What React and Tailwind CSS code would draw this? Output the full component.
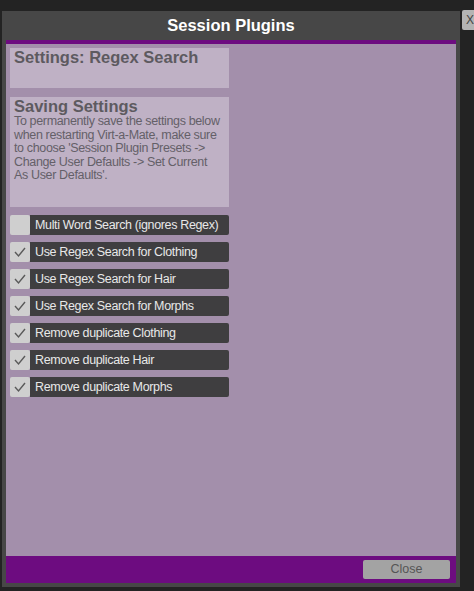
import React from "react";

const items = [
  { label: "Multi Word Search (ignores Regex)", checked: false },
  { label: "Use Regex Search for Clothing", checked: true },
  { label: "Use Regex Search for Hair", checked: true },
  { label: "Use Regex Search for Morphs", checked: true },
  { label: "Remove duplicate Clothing", checked: true },
  { label: "Remove duplicate Hair", checked: true },
  { label: "Remove duplicate Morphs", checked: true },
];

function Toggle({ label, checked }) {
  return (
    <div className="flex h-[20px] w-[219px]">
      <div className="flex h-[20px] w-[20px] items-center justify-center rounded-[2px] bg-[#cfcfcf]">
        {checked && (
          <svg width="14" height="12" viewBox="0 0 14 12">
            <polyline points="2,6 5.5,10 12,2" fill="none" stroke="#5a5a5a" strokeWidth="1.4" />
          </svg>
        )}
      </div>
      <div className="flex flex-1 items-center whitespace-nowrap rounded-r-[2px] bg-[#3f3e40] pl-[5px] text-[12.5px] tracking-[-0.35px] text-[#e8e8e8]">
        {label}
      </div>
    </div>
  );
}

export default function App() {
  return (
    <div
      className="relative h-[591px] w-[474px] overflow-hidden bg-[#232323] pt-[11px] pl-[2px]"
      style={{ fontFamily: '"Liberation Sans", Arial, sans-serif' }}
    >
      <div className="flex h-[576px] w-[458px] flex-col bg-[#474747] px-[4px] pb-[4px]">
        <div className="flex h-[29px] items-center justify-center pb-[1px] text-[16.5px] font-bold text-white">
          Session Plugins
        </div>
        <div className="h-[4px] bg-[#6d0c80]" />
        <div className="flex flex-1 flex-col bg-[#a38fab] px-[4px] pt-[4px]">
          <div className="h-[40px] w-[219px] bg-[#bfb1c5] px-[4px] text-[16.5px] font-bold leading-[19px] text-[#5d5a60]">
            Settings: Regex Search
          </div>
          <div className="mt-[9px] h-[110px] w-[219px] bg-[#bfb1c5] px-[4px] text-[#5d5a60]">
            <div className="text-[16.5px] font-bold leading-[18px]">Saving Settings</div>
            <div className="whitespace-nowrap text-[12.5px] leading-[13.6px] tracking-[-0.35px] text-[#646068]">
              To permanently save the settings below
              <br />
              when restarting Virt-a-Mate, make sure
              <br />
              to choose 'Session Plugin Presets -&gt;
              <br />
              Change User Defaults -&gt; Set Current
              <br />
              As User Defaults'.
            </div>
          </div>
          <div className="mt-[8px] flex flex-col gap-[7px]">
            {items.map((it) => (
              <Toggle key={it.label} {...it} />
            ))}
          </div>
        </div>
        <div className="flex h-[27px] items-center justify-end bg-[#6d0c80] pr-[6px]">
          <div className="flex h-[19px] w-[87px] items-center justify-center rounded-[2px] bg-[#a3a3a3] text-[12.5px] text-[#555555]">
            Close
          </div>
        </div>
      </div>
      <div className="absolute left-[462px] top-[10px] flex h-[20px] w-[16px] items-center justify-start rounded-[2px] bg-[#b4b4b4] pl-[4px] text-[12px] text-[#444]">
        X
      </div>
    </div>
  );
}
